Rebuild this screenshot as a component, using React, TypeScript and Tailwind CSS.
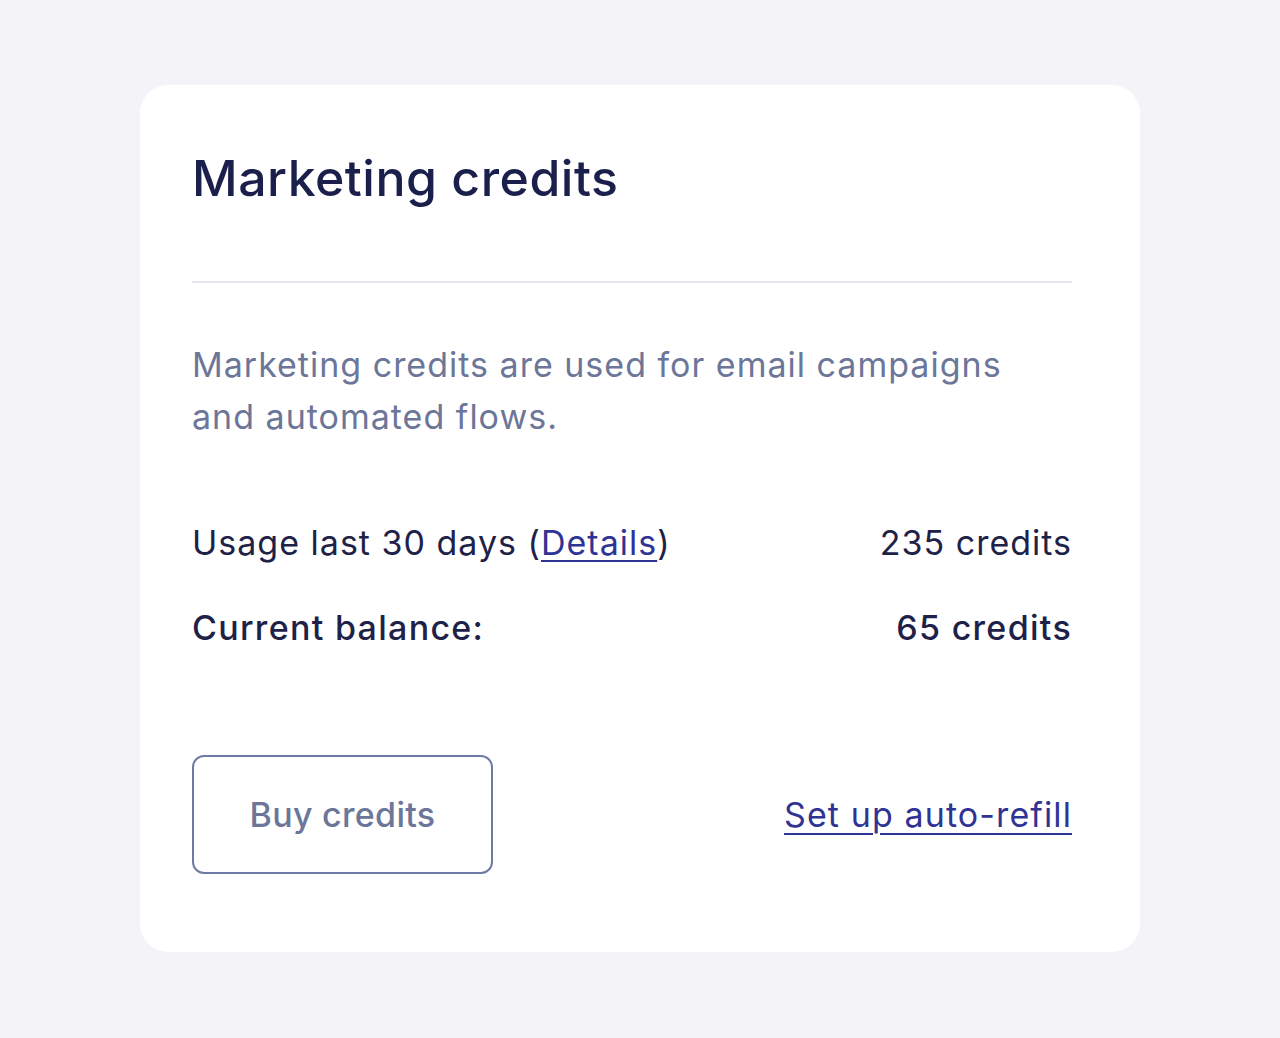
export default function App() {
  return (
    <div className="min-h-screen bg-[#f3f3f8] pt-[85px] pl-[140px]" style={{ fontFamily: 'Inter, "Noto Sans", sans-serif' }}>
      <div className="w-[1000px] rounded-[28px] bg-white pl-[52px] pr-[68px] pt-[63px] pb-[78px]">
        <h1 className="text-[50px] leading-[60px] font-medium text-[#1b1f4b] tracking-[0.5px]">Marketing credits</h1>
        <div className="mt-[73px] h-[2px] bg-[#e2e5ef]" />
        <p className="mt-[56px] text-[34px] leading-[52px] text-[#6c7699] tracking-[1px] max-w-[840px]">
          Marketing credits are used for email campaigns and automated flows.
        </p>
        <div className="mt-[74px] flex items-center justify-between text-[34px] leading-[52px] text-[#1e2248] tracking-[1px]">
          <span>
            Usage last 30 days (<a href="#" className="text-[#2f3394] underline underline-offset-[5px] decoration-2">Details</a>)
          </span>
          <span>235 credits</span>
        </div>
        <div className="mt-[33px] flex items-center justify-between text-[34px] leading-[52px] text-[#1e2248] font-medium tracking-[1.3px]">
          <span>Current balance:</span>
          <span>65 credits</span>
        </div>
        <div className="mt-[101px] flex items-center justify-between">
          <button className="w-[301px] h-[119px] rounded-[12px] border-2 border-[#6f7aa3] text-[34px] font-medium text-[#6c7699] tracking-[0.3px]">
            Buy credits
          </button>
          <a href="#" className="text-[34px] leading-[52px] text-[#2f3394] tracking-[1.1px] underline underline-offset-[6px] decoration-2">
            Set up auto-refill
          </a>
        </div>
      </div>
    </div>
  )
}
